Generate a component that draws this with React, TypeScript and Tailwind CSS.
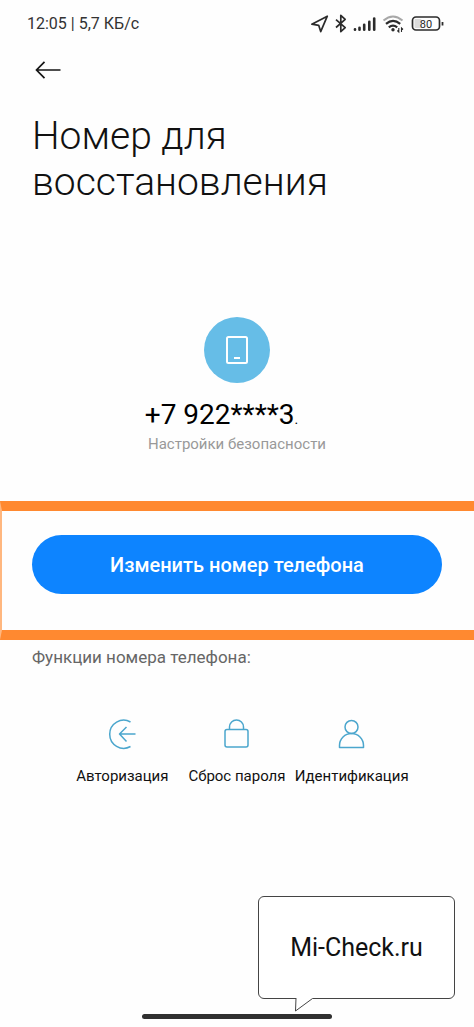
import React from 'react';

function StatusIcons() {
  return (
    <svg width="134" height="22" viewBox="310 12 134 22" fill="none" stroke="#2b2b2b" aria-hidden="true">
      <path d="M327.300 15.200 L311.800 23.200 L318.700 24.300 L320.700 30.600 Z" strokeWidth="1.700" strokeLinejoin="round" />
      <path d="M336 18.700 L345.200 26.700 L340.800 30.600 V14.300 L345.200 18.300 L336 26.500" strokeWidth="1.700" strokeLinejoin="round" />
      <g strokeWidth="2.600" strokeLinecap="round">
        <path d="M355 28.300 V28.700" />
        <path d="M359.500 26.700 V28.700" />
        <path d="M364.200 23.800 V28.700" />
        <path d="M369.300 20.800 V28.700" />
        <path d="M374.200 17.500 V28.700" />
      </g>
      <path d="M383.500 19.500 Q393 11.500 402.500 19.500" strokeWidth="2" stroke="#a8a8a8" />
      <path d="M386 22.800 Q393 17 400.200 22.800" strokeWidth="2.200" />
      <path d="M388.800 26.300 Q393 22.800 397.200 26.300" strokeWidth="2.200" />
      <circle cx="393" cy="28.700" r="1.700" fill="#2b2b2b" stroke="none" />
      <path d="M398.800 27 V31 L397.300 29.500 M401.500 31 V27 L403 28.500" strokeWidth="1.100" />
      <rect x="412.500" y="16" width="27" height="13" rx="3.500" strokeWidth="1.700" />
      <rect x="414.500" y="18" width="7" height="9" rx="1" fill="#dcdcdc" stroke="none" />
      <path d="M442.500 21 V24.500" strokeWidth="1.800" />
      <text x="426" y="26.500" textAnchor="middle" fontSize="11" fill="#2b2b2b" stroke="none">80</text>
    </svg>
  );
}

const features = [
  {
    label: 'Авторизация',
    icon: (
      <>
        <path d="M23.500 3 A14 14 0 1 0 23.500 27.500" />
        <path d="M28.500 15 H12.500 M19.500 8 L12.500 15 L19.500 22.500" />
      </>
    ),
  },
  {
    label: 'Сброс пароля',
    icon: (
      <>
        <rect x="4" y="10.500" width="23" height="17.500" rx="2" />
        <path d="M8.500 10.500 V8 A7 7 0 0 1 22.500 8 V10.500" />
      </>
    ),
  },
  {
    label: 'Идентификация',
    icon: (
      <>
        <circle cx="15.500" cy="8" r="6.500" />
        <path d="M3.500 28.500 V26.500 A12 12 0 0 1 27.500 26.500 V28.500 Z" />
      </>
    ),
  },
];

export default function App() {
  return (
    <div className="flex min-h-screen flex-col bg-[#fefefe] font-[Roboto,sans-serif] text-[#111]">
      <header className="flex h-11 items-center justify-between pt-1 pr-[30px] pl-[27px]">
        <span className="text-base text-[#333]">12:05 | 5,7 КБ/с</span>
        <StatusIcons />
      </header>

      <main className="flex flex-col">
        <div className="flex h-[69px] items-start px-8 pt-3">
          <button type="button" aria-label="Назад" className="flex h-7 w-8 items-center justify-center">
            <svg width="28" height="20" viewBox="0 0 28 20" fill="none" stroke="#151515" strokeWidth="1.700">
              <path d="M26.500 10 H2.500 M10.500 1.800 L2.500 10 L10.500 18.200" />
            </svg>
          </button>
        </div>
        <h1 className="px-8 text-[39px] leading-[46px] font-light">
          Номер для
          <br />
          восстановления
        </h1>

        <section className="mt-28 flex flex-col items-center">
          <div className="flex size-[66px] items-center justify-center rounded-full bg-[#66bde7]">
            <svg width="24" height="30" viewBox="0 0 24 30" fill="none" stroke="#fff" strokeWidth="2" aria-hidden="true">
              <rect x="2" y="2" width="20" height="26" rx="1.500" />
              <path d="M9 23 H15" />
            </svg>
          </div>
          <p className="mt-4 pr-[31px] text-[28px] leading-8 text-black">
            +7 922****3<span className="text-sm">.</span>
          </p>
          <p className="mt-[3px] text-[15px] leading-5 text-[#999]">Настройки безопасности</p>
        </section>

        <section className="mt-[47px] border-y-10 border-l-2 border-y-[#ff8930] border-l-[#ffb77f] pt-6 pr-8 pb-9 pl-[30px]">
          <button type="button" className="h-[59px] w-full rounded-full bg-[#0d84ff] text-xl font-medium text-white">
            Изменить номер телефона
          </button>
        </section>

        <section>
          <h2 className="mt-[5px] px-8 text-[17px] leading-6 text-[#666]">Функции номера телефона:</h2>
          <ul className="mt-[50px] grid grid-cols-3 px-[65px]">
            {features.map((f) => (
              <li key={f.label} className="flex flex-col items-center gap-4">
                <svg width="31" height="31" viewBox="0 0 31 31" fill="none" stroke="#4ba6cd" strokeWidth="1.500" strokeLinejoin="round" aria-hidden="true">
                  {f.icon}
                </svg>
                <span className="text-[15px] leading-5 whitespace-nowrap">{f.label}</span>
              </li>
            ))}
          </ul>
        </section>
      </main>

      <footer className="mt-auto flex flex-col pb-2">
        <div className="relative mr-[19px] mb-[15px] flex h-[103px] w-[197px] items-center justify-center self-end rounded-md border border-[#444] bg-white text-[25px]">
          Mi-Check.ru
          <svg className="absolute top-full left-9 -mt-px" width="20" height="16" viewBox="0 0 20 16" aria-hidden="true">
            <path d="M1 0 V2.500 L0.500 14 L17.500 2.500 V0 Z" fill="#fff" />
            <path d="M1 1 L0.500 14 L17.500 1.500" fill="none" stroke="#444" />
          </svg>
        </div>
        <div className="h-[5px] w-[190px] self-center rounded-full bg-[#303030]" />
      </footer>
    </div>
  );
}
